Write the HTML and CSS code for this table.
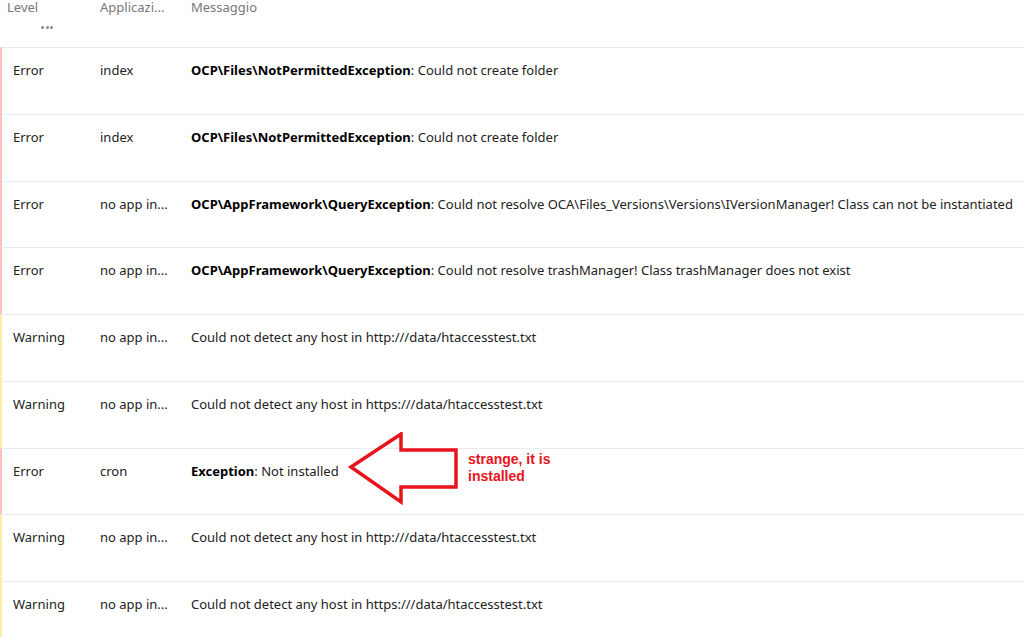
FILE: index.html
```html
<!DOCTYPE html>
<html lang="it">
<head>
<meta charset="utf-8">
<link rel="stylesheet" href="styles.css">
</head>
<body>
<div class="log">
  <div class="head">
    <div class="hcell hlevel"><span>Level</span><span class="dots"><i></i><i></i><i></i></span></div>
    <div class="hcell">Applicazi...</div>
    <div class="hcell">Messaggio</div>
  </div>
  <div class="row error"><div>Error</div><div>index</div><div><b>OCP\Files\NotPermittedException</b>: Could not create folder</div></div>
  <div class="row error"><div>Error</div><div>index</div><div><b>OCP\Files\NotPermittedException</b>: Could not create folder</div></div>
  <div class="row error"><div>Error</div><div>no app in...</div><div><b>OCP\AppFramework\QueryException</b>: Could not resolve OCA\Files_Versions\Versions\IVersionManager! Class can not be instantiated</div></div>
  <div class="row error"><div>Error</div><div>no app in...</div><div><b>OCP\AppFramework\QueryException</b>: Could not resolve trashManager! Class trashManager does not exist</div></div>
  <div class="row warning"><div>Warning</div><div>no app in...</div><div>Could not detect any host in http:///data/htaccesstest.txt</div></div>
  <div class="row warning"><div>Warning</div><div>no app in...</div><div>Could not detect any host in https:///data/htaccesstest.txt</div></div>
  <div class="row error"><div>Error</div><div>cron</div><div><b>Exception</b>: Not installed</div></div>
  <div class="row warning"><div>Warning</div><div>no app in...</div><div>Could not detect any host in http:///data/htaccesstest.txt</div></div>
  <div class="row warning"><div>Warning</div><div>no app in...</div><div>Could not detect any host in https:///data/htaccesstest.txt</div></div>
</div>
<svg class="arrow" width="120" height="80" viewBox="0 0 120 80">
  <polygon points="4,35 54,2 54,18 109,18 109,55 54,55 54,70" fill="none" stroke="#e8131b" stroke-width="3.5" stroke-linejoin="miter"/>
</svg>
<div class="note">strange, it is<br>installed</div>
</body>
</html>
```
FILE: styles.css
```css
html, body {
  margin: 0;
  padding: 0;
  background: #fff;
  width: 1024px;
  height: 637px;
  overflow: hidden;
  position: relative;
}
body {
  font-family: "Noto Sans", "Open Sans", sans-serif;
  font-size: 13px;
  color: #222;
}
.head {
  display: grid;
  grid-template-columns: 93px 91px 1fr;
  box-sizing: border-box;
  height: 47px;
  padding: 0 0 0 7px;
  color: #777;
  line-height: 14px;
}
.hlevel {
  display: flex;
  flex-direction: column;
}
.dots {
  display: flex;
  gap: 1.5px;
  margin-top: 12px;
  margin-left: 34px;
}
.dots i {
  display: block;
  width: 3px;
  height: 3px;
  border-radius: 50%;
  background: #8a8a8a;
}
.row {
  display: grid;
  grid-template-columns: 87px 91px 1fr;
  box-sizing: border-box;
  height: 66.75px;
  padding: 12px 0 0 11px;
  border-top: 1px solid #ececec;
  border-left: 2px solid #ffbfbf;
  line-height: 20px;
  white-space: nowrap;
}
.row.warning {
  border-left-color: #ffeaa8;
}
.row b {
  color: #000;
  font-weight: 700;
}
.arrow {
  position: absolute;
  left: 347px;
  top: 432px;
}
.note {
  position: absolute;
  left: 468px;
  top: 451px;
  font-family: "Liberation Sans", Arial, sans-serif;
  font-weight: 700;
  font-size: 14px;
  line-height: 17px;
  color: #e8131b;
}
```
